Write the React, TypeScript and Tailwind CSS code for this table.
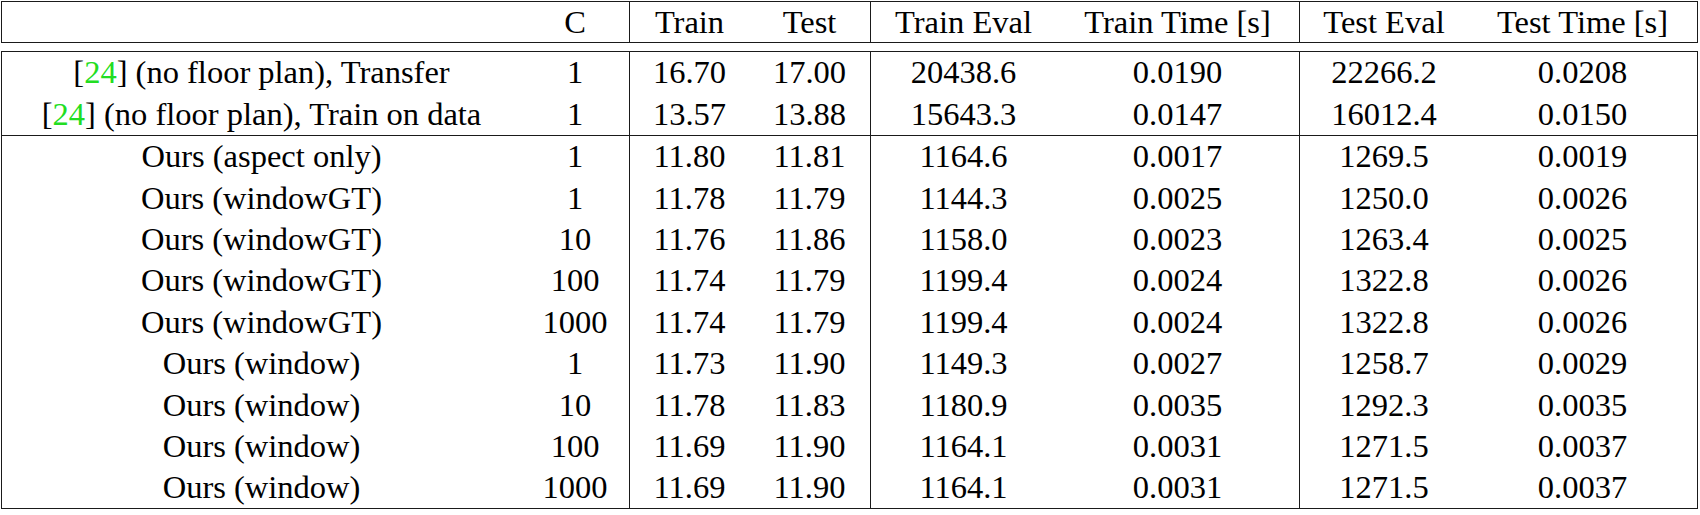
const cols = "grid grid-cols-[520px_108px_120px_121px_186px_243px_169px_1fr]";

type Row = { name: React.ReactNode; c: string; train: string; test: string; trEval: string; trTime: string; teEval: string; teTime: string };

const Ref = () => (
  <>
    [<span className="text-[#22dd22]">24</span>]
  </>
);

const prior: Row[] = [
  { name: <><Ref /> (no floor plan), Transfer</>, c: "1", train: "16.70", test: "17.00", trEval: "20438.6", trTime: "0.0190", teEval: "22266.2", teTime: "0.0208" },
  { name: <><Ref /> (no floor plan), Train on data</>, c: "1", train: "13.57", test: "13.88", trEval: "15643.3", trTime: "0.0147", teEval: "16012.4", teTime: "0.0150" },
];

const ours: Row[] = [
  { name: "Ours (aspect only)", c: "1", train: "11.80", test: "11.81", trEval: "1164.6", trTime: "0.0017", teEval: "1269.5", teTime: "0.0019" },
  { name: "Ours (windowGT)", c: "1", train: "11.78", test: "11.79", trEval: "1144.3", trTime: "0.0025", teEval: "1250.0", teTime: "0.0026" },
  { name: "Ours (windowGT)", c: "10", train: "11.76", test: "11.86", trEval: "1158.0", trTime: "0.0023", teEval: "1263.4", teTime: "0.0025" },
  { name: "Ours (windowGT)", c: "100", train: "11.74", test: "11.79", trEval: "1199.4", trTime: "0.0024", teEval: "1322.8", teTime: "0.0026" },
  { name: "Ours (windowGT)", c: "1000", train: "11.74", test: "11.79", trEval: "1199.4", trTime: "0.0024", teEval: "1322.8", teTime: "0.0026" },
  { name: "Ours (window)", c: "1", train: "11.73", test: "11.90", trEval: "1149.3", trTime: "0.0027", teEval: "1258.7", teTime: "0.0029" },
  { name: "Ours (window)", c: "10", train: "11.78", test: "11.83", trEval: "1180.9", trTime: "0.0035", teEval: "1292.3", teTime: "0.0035" },
  { name: "Ours (window)", c: "100", train: "11.69", test: "11.90", trEval: "1164.1", trTime: "0.0031", teEval: "1271.5", teTime: "0.0037" },
  { name: "Ours (window)", c: "1000", train: "11.69", test: "11.90", trEval: "1164.1", trTime: "0.0031", teEval: "1271.5", teTime: "0.0037" },
];

function Line({ cells, h }: { cells: React.ReactNode[]; h: string }) {
  // vertical rules sit after C, Test and Train Time
  const ruled = [1, 3, 5];
  return (
    <div className={`${cols} ${h}`}>
      {cells.map((cell, i) => (
        <div
          key={i}
          className={`flex items-center justify-center whitespace-nowrap ${ruled.includes(i) ? "border-r border-[#1a1a1a]" : ""}`}
        >
          {cell}
        </div>
      ))}
    </div>
  );
}

function DataRow({ r }: { r: Row }) {
  return <Line h="h-[41.4px]" cells={[r.name, r.c, r.train, r.test, r.trEval, r.trTime, r.teEval, r.teTime]} />;
}

export default function App() {
  return (
    <div className="h-[515px] w-[1700px] bg-white pl-[0.5px] pt-px font-['Liberation_Serif','Times_New_Roman',serif] text-[32.5px] leading-none text-black">
      <div className="w-[1697px] border-[1.5px] border-[#1a1a1a]">
        <Line h="h-[40px]" cells={["", "C", "Train", "Test", "Train Eval", "Train Time [s]", "Test Eval", "Test Time [s]"]} />
      </div>

      <div className="mt-[8px] w-[1697px] border-[1.5px] border-[#1a1a1a]">
        {prior.map((r, i) => (
          <DataRow key={i} r={r} />
        ))}
        <div className="h-px bg-[#1a1a1a]" />
        {ours.map((r, i) => (
          <DataRow key={i} r={r} />
        ))}
      </div>
    </div>
  );
}
